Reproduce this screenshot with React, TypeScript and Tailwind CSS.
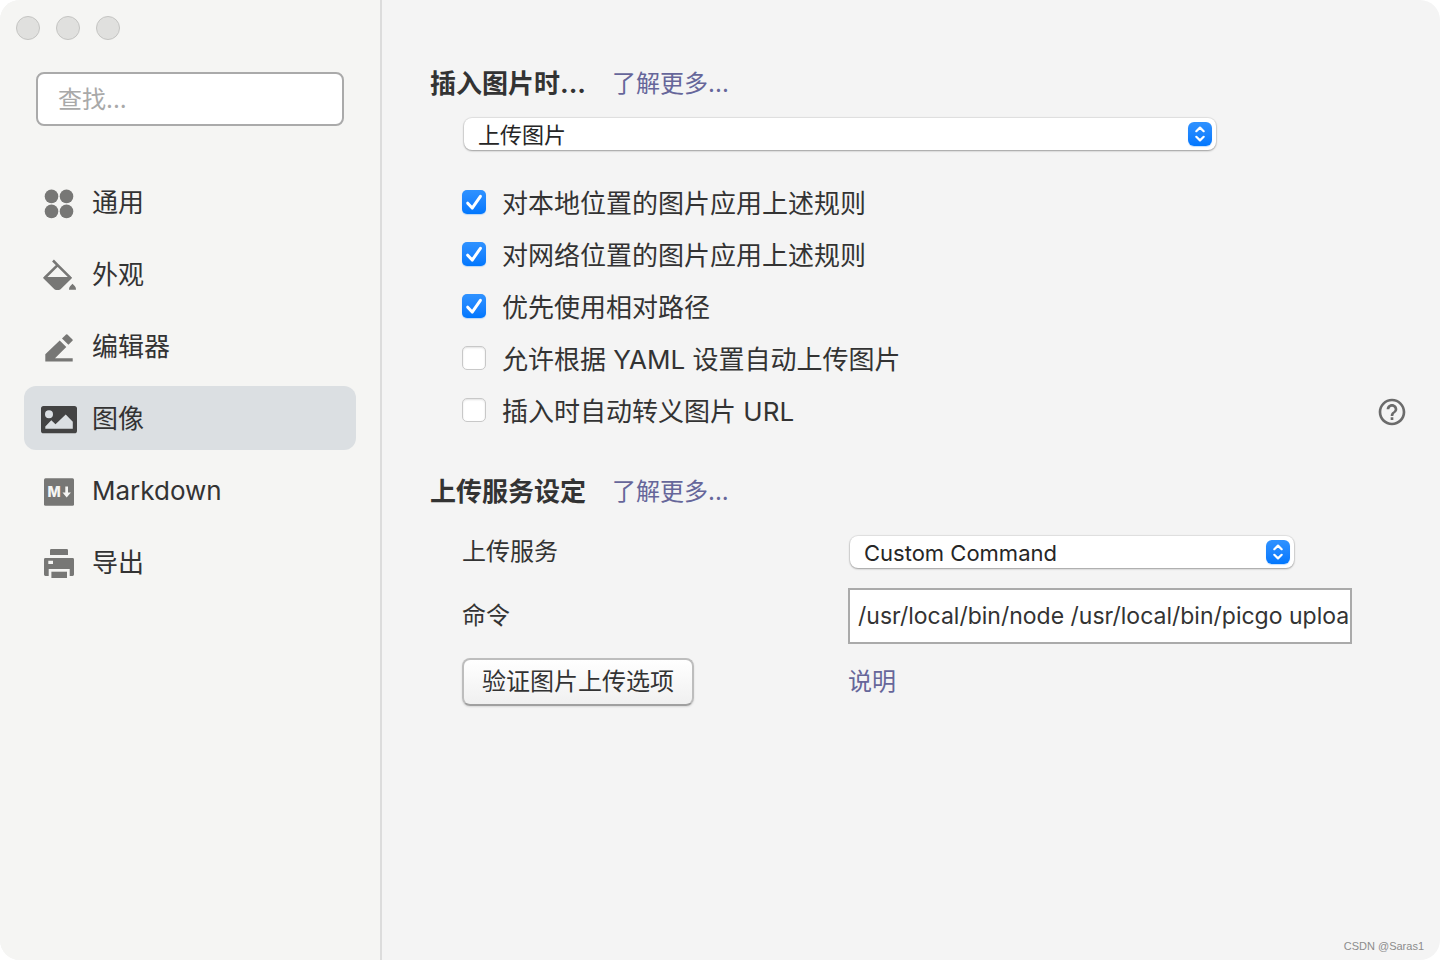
import { ReactNode, useState } from "react";
import { MdHelpOutline } from "react-icons/md";

const GeneralIcon = (
  <>
    <circle cx="11.5" cy="13.4" r="6.8" />
    <circle cx="26.5" cy="13.4" r="6.8" />
    <circle cx="11.5" cy="28.4" r="6.8" />
    <circle cx="26.5" cy="28.4" r="6.8" />
  </>
);

const AppearanceIcon = (
  <>
    <path
      d="M13 5.5L17.6 10.1L30.2 22.7M17.6 10.1L4.8 22.7"
      fill="none"
      stroke="currentColor"
      strokeWidth="2.6"
    />
    <path d="M3.3 21.9H31.8V23.2L20.6 34.2Q19.8 35 18.8 35H16.2Q15.2 35 14.4 34.2L3.3 23.2Z" />
    <path d="M32.5 28.8C34 30.4 36.3 32 36 34.8H29C28.8 32 31 30.4 32.5 28.8Z" />
  </>
);

const EditorIcon = (
  <>
    <path d="M5.3 34.4V27.2L19.7 13.5L26.3 19.9L15 31.3H32.7V34.4Z" />
    <path d="M22 11.4L26.1 7.5Q26.8 7 27.4 7.5L32.5 12.5Q33 13.1 32.5 13.8L28.4 17.7Z" />
  </>
);

const ImageIcon = (
  <path
    fillRule="evenodd"
    d="M3.6 7H34.4Q37 7 37 9.6V31.7Q37 34.3 34.4 34.3H3.6Q1 34.3 1 31.7V9.6Q1 7 3.6 7ZM9 11.3A4 4 0 1 0 9 19.3A4 4 0 1 0 9 11.3ZM5.3 29.7H32.8V22.8L25.7 15.5L15.5 25.2L11.3 21.2L5.3 27.4Z"
  />
);

const MarkdownIcon = (
  <>
    <rect x="4" y="7.3" width="30" height="27.4" rx="1.5" />
    <text
      x="7.6"
      y="26"
      fill="#f5f5f3"
      fontSize="14"
      fontWeight="800"
      fontFamily="Inter, sans-serif"
    >
      M
    </text>
    <path d="M25.3 15.6H28V21.5H30.9L26.7 26.4L22.5 21.5H25.3Z" fill="#f5f5f3" />
  </>
);

const ExportIcon = (
  <>
    <path d="M10 12V7.2Q10 6 11.2 6H26.8Q28 6 28 7.2V12Z" />
    <path
      fillRule="evenodd"
      d="M5.4 15H32.6Q34 15 34 16.4V31.6Q34 33 32.6 33H29.7V26H8.7V33H5.4Q4 33 4 31.6V16.4Q4 15 5.4 15ZM8.3 17.8V21H13V17.8Z"
    />
    <rect x="11.4" y="28.7" width="15.6" height="6.3" />
  </>
);

const menu: { name: string; icon: ReactNode }[] = [
  { name: "通用", icon: GeneralIcon },
  { name: "外观", icon: AppearanceIcon },
  { name: "编辑器", icon: EditorIcon },
  { name: "图像", icon: ImageIcon },
  { name: "Markdown", icon: MarkdownIcon },
  { name: "导出", icon: ExportIcon },
];

const imageRules: { label: string; checked: boolean; help?: boolean }[] = [
  { label: "对本地位置的图片应用上述规则", checked: true },
  { label: "对网络位置的图片应用上述规则", checked: true },
  { label: "优先使用相对路径", checked: true },
  { label: "允许根据 YAML 设置自动上传图片", checked: false },
  { label: "插入时自动转义图片 URL", checked: false, help: true },
];

interface SelectProps {
  id: string;
  label?: string;
  options: string[];
  className: string;
}

const Select: React.FC<SelectProps> = ({ id, label, options, className }) => {
  return (
    <div className={`relative w-full pl-0.5 ${className}`}>
      <select
        id={id}
        aria-label={label}
        className="block h-8 w-full appearance-none rounded-lg bg-white pl-3.5 pr-10 pt-px text-[22px] leading-8 text-[#262626] shadow-[0_0_1px_1px_rgba(0,0,0,0.08),0_1px_2px_rgba(0,0,0,0.3)] outline-none"
      >
        {options.map((option) => (
          <option key={option}>{option}</option>
        ))}
      </select>
      <span className="pointer-events-none absolute right-1 top-1 flex size-6 items-center justify-center rounded-md bg-linear-to-b from-[#2f92ff] to-[#0077fe] shadow-[0_1px_1px_rgba(0,119,254,0.25)]">
        <svg
          viewBox="0 0 24 24"
          className="size-6"
          fill="none"
          stroke="white"
          strokeWidth="2.2"
          strokeLinecap="round"
          strokeLinejoin="round"
        >
          <path d="M8.3 9.2L12 5.6L15.7 9.2M8.3 14.8L12 18.4L15.7 14.8" />
        </svg>
      </span>
    </div>
  );
};

const Checkbox: React.FC<{ label: string; defaultChecked: boolean }> = ({
  label,
  defaultChecked,
}) => {
  return (
    <label className="flex items-center gap-4">
      <span className="relative mb-1 flex size-6 shrink-0">
        <input
          type="checkbox"
          defaultChecked={defaultChecked}
          className="peer size-6 appearance-none rounded-[5px] border border-[#c8c8c8] bg-white shadow-[inset_0_1px_2px_rgba(0,0,0,0.12)] checked:border-0 checked:bg-linear-to-b checked:from-[#2f92ff] checked:to-[#0077fe] checked:shadow-[0_1px_1px_rgba(0,119,254,0.25)]"
        />
        <svg
          viewBox="0 0 24 24"
          className="pointer-events-none absolute inset-0 hidden size-6 peer-checked:block"
          fill="none"
          stroke="white"
          strokeWidth="3"
          strokeLinecap="round"
          strokeLinejoin="round"
        >
          <path d="M5.7 13.2L10.2 18.1L18.4 6.3" />
        </svg>
      </span>
      <span className="text-[26px] leading-9">{label}</span>
    </label>
  );
};

const SectionTitle: React.FC<{ title: string }> = ({ title }) => {
  return (
    <div className="flex items-center gap-[26px] leading-9">
      <h2 className="text-[26px] font-bold">{title}</h2>
      <a href="#more" className="text-2xl leading-9 text-[#66669a]">
        了解更多...
      </a>
    </div>
  );
};

const App: React.FC = () => {
  const [active, setActive] = useState<string>("图像");

  return (
    <div className="bg-white">
      <div className="relative flex min-h-screen overflow-hidden rounded-[20px] bg-[#f4f4f4] font-['Inter','Noto_Sans_CJK_SC',sans-serif] text-[#333333]">
        <aside className="w-[382px] shrink-0 border-r-2 border-[#dcdcdc] bg-[#f5f5f3]">
          <div className="flex gap-4 px-4 pt-4">
            <span className="size-6 rounded-full border border-[#c4c4c2] bg-[#e0e0de]" />
            <span className="size-6 rounded-full border border-[#c4c4c2] bg-[#e0e0de]" />
            <span className="size-6 rounded-full border border-[#c4c4c2] bg-[#e0e0de]" />
          </div>
          <div className="px-9 pt-8">
            <input
              type="search"
              aria-label="查找"
              placeholder="查找..."
              className="block h-[54px] w-full appearance-none rounded-lg border-2 border-[#aaaaaa] bg-white px-5 text-2xl outline-none placeholder:text-[#a9a9a9]"
            />
          </div>
          <nav className="mt-11 flex flex-col gap-2 px-6">
            {menu.map((item) => (
              <button
                key={item.name}
                type="button"
                onClick={(): void => setActive(item.name)}
                className={`flex h-16 items-center gap-3.5 rounded-xl px-4 text-left text-[26px] leading-9 ${
                  active === item.name ? "bg-[#dbdfe2]" : ""
                }`}
              >
                <svg
                  viewBox="0 0 38 38"
                  fill="currentColor"
                  className={`size-[38px] shrink-0 ${
                    active === item.name ? "text-[#434343]" : "text-[#777775]"
                  }`}
                >
                  {item.icon}
                </svg>
                <span className="pt-0.5">{item.name}</span>
              </button>
            ))}
          </nav>
        </aside>

        <main className="min-w-0 flex-1 pb-16 pl-12 pr-8 pt-[66px]">
          <section>
            <SectionTitle title="插入图片时..." />
            <div className="pl-8 pt-4">
              <Select
                id="insert-action"
                label="插入图片时"
                options={["上传图片"]}
                className="max-w-[754px]"
              />
              <div className="pt-7">
                {imageRules.map((rule) => (
                  <div
                    key={rule.label}
                    className="flex h-[52px] items-center justify-between"
                  >
                    <Checkbox label={rule.label} defaultChecked={rule.checked} />
                    {rule.help && (
                      <button type="button" aria-label="帮助">
                        <MdHelpOutline className="size-8 text-[#6b6b6b]" />
                      </button>
                    )}
                  </div>
                ))}
              </div>
            </div>
          </section>

          <section className="pt-9">
            <SectionTitle title="上传服务设定" />
            <div className="pl-8 pt-2.5 text-2xl">
              <div className="flex h-16 items-center">
                <label htmlFor="service" className="w-[386px] shrink-0">
                  上传服务
                </label>
                <Select
                  id="service"
                  options={["Custom Command"]}
                  className="max-w-[446px]"
                />
              </div>
              <div className="flex h-16 items-center">
                <label htmlFor="command" className="w-[386px] shrink-0">
                  命令
                </label>
                <input
                  id="command"
                  type="text"
                  defaultValue="/usr/local/bin/node /usr/local/bin/picgo upload"
                  className="h-14 w-full max-w-[504px] border-2 border-[#aaaaaa] bg-white pl-2 text-[23px] outline-none"
                />
              </div>
              <div className="flex h-[68px] items-center">
                <div className="w-[386px] shrink-0">
                  <button
                    type="button"
                    className="h-12 rounded-lg border-2 border-[#bdbdbd] border-b-[#a0a0a0] bg-linear-to-b from-white to-[#f0f0f0] px-[18px] shadow-[0_1px_2px_rgba(0,0,0,0.12)]"
                  >
                    验证图片上传选项
                  </button>
                </div>
                <a href="#help" className="text-[#66669a]">
                  说明
                </a>
              </div>
            </div>
          </section>
        </main>

        <span className="absolute bottom-2 right-4 font-['Liberation_Sans',sans-serif] text-[11px] leading-3 text-[#8c8c8c]">
          CSDN @Saras1
        </span>
      </div>
    </div>
  );
};

export default App;
